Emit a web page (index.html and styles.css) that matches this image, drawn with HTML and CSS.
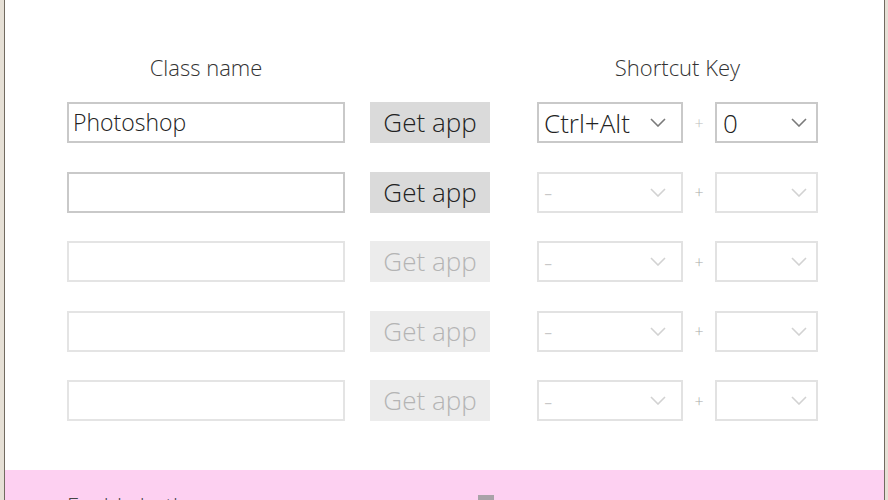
FILE: index.html
```html
<!DOCTYPE html>
<html lang="en">
<head>
<meta charset="utf-8">
<title>App shortcuts</title>
<link rel="stylesheet" href="styles.css">
</head>
<body>
<div class="window">
  <h1 class="title">Switch apps quickly</h1>
  <div class="labels">
    <div class="label label-class">Class name</div>
    <div class="label label-key">Shortcut Key</div>
  </div>
  <div class="rows">
    <div class="row">
      <div class="field">Photoshop</div>
      <div class="get">Get app</div>
      <div class="select mod"><span class="val">Ctrl+Alt</span><svg class="chev" viewBox="0 0 16 9"><path d="M1 1 L8 8 L15 1"/></svg></div>
      <div class="plus">+</div>
      <div class="select key"><span class="val">0</span><svg class="chev" viewBox="0 0 16 9"><path d="M1 1 L8 8 L15 1"/></svg></div>
    </div>
    <div class="row keys-off">
      <div class="field"></div>
      <div class="get">Get app</div>
      <div class="select mod"><span class="val">-</span><svg class="chev" viewBox="0 0 16 9"><path d="M1 1 L8 8 L15 1"/></svg></div>
      <div class="plus">+</div>
      <div class="select key"><span class="val"></span><svg class="chev" viewBox="0 0 16 9"><path d="M1 1 L8 8 L15 1"/></svg></div>
    </div>
    <div class="row off keys-off">
      <div class="field"></div>
      <div class="get">Get app</div>
      <div class="select mod"><span class="val">-</span><svg class="chev" viewBox="0 0 16 9"><path d="M1 1 L8 8 L15 1"/></svg></div>
      <div class="plus">+</div>
      <div class="select key"><span class="val"></span><svg class="chev" viewBox="0 0 16 9"><path d="M1 1 L8 8 L15 1"/></svg></div>
    </div>
    <div class="row off keys-off">
      <div class="field"></div>
      <div class="get">Get app</div>
      <div class="select mod"><span class="val">-</span><svg class="chev" viewBox="0 0 16 9"><path d="M1 1 L8 8 L15 1"/></svg></div>
      <div class="plus">+</div>
      <div class="select key"><span class="val"></span><svg class="chev" viewBox="0 0 16 9"><path d="M1 1 L8 8 L15 1"/></svg></div>
    </div>
    <div class="row off keys-off">
      <div class="field"></div>
      <div class="get">Get app</div>
      <div class="select mod"><span class="val">-</span><svg class="chev" viewBox="0 0 16 9"><path d="M1 1 L8 8 L15 1"/></svg></div>
      <div class="plus">+</div>
      <div class="select key"><span class="val"></span><svg class="chev" viewBox="0 0 16 9"><path d="M1 1 L8 8 L15 1"/></svg></div>
    </div>
  </div>
  <div class="footer">
    <div class="footer-label">Enable hotkeys</div>
    <div class="footer-box"></div>
  </div>
</div>
</body>
</html>
```
FILE: styles.css
```css
html, body {
  margin: 0;
  padding: 0;
  height: 500px;
  overflow: hidden;
}
body {
  background: #e6e0d6;
  font-family: "Open Sans", "Noto Sans", "Liberation Sans", sans-serif;
  font-weight: 300;
  color: #222;
  display: flex;
}
.window {
  margin-left: 4px;
  width: 879px;
  height: 500px;
  background: #ffffff;
  border-left: 1px solid #716a60;
  border-right: 1px solid #716a60;
  display: flex;
  flex-direction: column;
  overflow: hidden;
}
.title {
  margin: -38px 0 0 0;
  height: 39px;
  line-height: 39px;
  font-size: 30px;
  font-weight: 300;
  text-align: center;
  color: #333;
}
.labels {
  display: flex;
  margin-top: 52px;
  padding-left: 62px;
  font-size: 22px;
  line-height: 28px;
  color: #333;
}
.label-class {
  width: 278px;
  text-align: center;
}
.label-key {
  margin-left: 192px;
  width: 281px;
  text-align: center;
}
.rows {
  display: flex;
  flex-direction: column;
  gap: 28.5px;
  margin-top: 21px;
  padding-left: 62px;
}
.row {
  display: flex;
  align-items: center;
  height: 41px;
}
.field {
  box-sizing: border-box;
  width: 278px;
  height: 41px;
  border: 2px solid #c9c9c9;
  padding-left: 4px;
  font-size: 23px;
  line-height: 37px;
  color: #222;
}
.get {
  margin-left: 25px;
  width: 120px;
  height: 41px;
  background: #dadada;
  font-size: 26px;
  line-height: 41px;
  text-align: center;
  color: #222;
}
.select {
  box-sizing: border-box;
  height: 41px;
  border: 2px solid #c9c9c9;
  display: flex;
  align-items: center;
  justify-content: space-between;
  font-size: 26px;
  color: #222;
}
.select.mod {
  margin-left: 47px;
  width: 146px;
  padding: 0 15px 0 5px;
}
.select.key {
  width: 103px;
  padding: 0 9px 0 6px;
}
.chev {
  width: 16px;
  height: 9px;
  fill: none;
  stroke: #7a7a7a;
  stroke-width: 1.6;
}
.plus {
  width: 32px;
  text-align: center;
  font-size: 16px;
  color: #bdbdbd;
}
.keys-off .select {
  border-color: #e2e2e2;
  color: #c8c8c8;
}
.keys-off .chev {
  stroke: #d2d2d2;
}
.keys-off .plus {
  color: #a9a9a9;
}
.off .field {
  border-color: #e4e4e4;
}
.off .get {
  background: #ececec;
  color: #b4b4b4;
}
.footer {
  margin-top: 49px;
  flex: 1;
  background: #fdd0f1;
  display: flex;
  align-items: flex-start;
  padding: 21px 0 0 62px;
}
.footer-label {
  font-size: 22px;
  line-height: 28px;
  width: 411px;
  color: #444;
}
.footer-box {
  margin-top: 4px;
  width: 16px;
  height: 16px;
  background: #a9a2a8;
}
```
